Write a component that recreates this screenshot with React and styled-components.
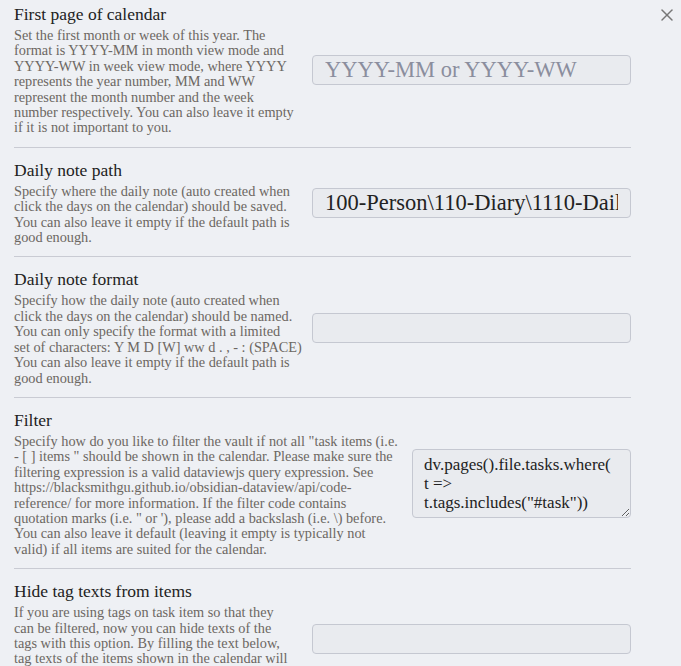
import styled, { createGlobalStyle } from "styled-components";
import { X } from "lucide-react";

const GlobalStyle = createGlobalStyle`
    html, body {
        margin: 0;
        padding: 0;
        overflow: hidden;
        background: #eef0f4;
    }
    body {
        font-family: "Liberation Serif", serif;
    }
`;

const Modal = styled.div`
    position: relative;
    min-height: 666px;
    padding: 0 50px 0 14px;
    background: #eef0f4;
`;

const CloseButton = styled.div`
    position: absolute;
    top: 5px;
    right: 4px;
    width: 20px;
    height: 20px;
    display: flex;
    align-items: center;
    justify-content: center;
    color: #777;
`;

const Item = styled.div`
    display: flex;
    align-items: center;
    gap: 14px;
    padding: ${(props) => (props.$first ? "4px 0 11px" : "12px 0 11px")};
    border-top: ${(props) => (props.$first ? "none" : "1px solid #c9cbd3")};
`;

const Info = styled.div`
    flex: 1 1 auto;
    min-width: 0;
`;

const Name = styled.div`
    font-size: 17.5px;
    line-height: 20px;
    color: #222;
`;

const Description = styled.div`
    margin-top: 4px;
    font-size: 14.3px;
    line-height: 15.4px;
    color: #6c6762;
    white-space: pre;
`;

const Control = styled.div`
    flex: 0 0 auto;
    width: ${(props) => props.$width}px;
    display: flex;
    justify-content: flex-end;
`;

const TextInput = styled.input`
    box-sizing: border-box;
    width: 100%;
    height: 30px;
    padding: 0 12px;
    border: 1px solid #c5c8d1;
    border-radius: 4px;
    background: #e9ebef;
    font-family: "Liberation Serif", serif;
    font-size: 22.5px;
    color: #222;
    outline: none;

    &::placeholder {
        color: #8b8e9e;
    }
`;

const TextArea = styled.textarea`
    box-sizing: border-box;
    width: 100%;
    height: 69px;
    padding: 5px 11px;
    border: 1px solid #c5c8d1;
    border-radius: 4px;
    background: #e9ebef;
    font-family: "Liberation Serif", serif;
    font-size: 17px;
    line-height: 19px;
    color: #222;
    resize: vertical;
    overflow: hidden;
    outline: none;
`;

const settings = [
    {
        name: "First page of calendar",
        desc: [
            "Set the first month or week of this year. The",
            "format is YYYY-MM in month view mode and",
            "YYYY-WW in week view mode, where YYYY",
            "represents the year number, MM and WW",
            "represent the month number and the week",
            "number respectively. You can also leave it empty",
            "if it is not important to you.",
        ],
        control: "input",
        placeholder: "YYYY-MM or YYYY-WW",
    },
    {
        name: "Daily note path",
        desc: [
            "Specify where the daily note (auto created when",
            "click the days on the calendar) should be saved.",
            "You can also leave it empty if the default path is",
            "good enough.",
        ],
        control: "input",
        value: "100-Person\\110-Diary\\1110-Daily",
    },
    {
        name: "Daily note format",
        desc: [
            "Specify how the daily note (auto created when",
            "click the days on the calendar) should be named.",
            "You can only specify the format with a limited",
            "set of characters: Y M D [W] ww d . , - : (SPACE)",
            "You can also leave it empty if the default path is",
            "good enough.",
        ],
        control: "input",
    },
    {
        name: "Filter",
        desc: [
            'Specify how do you like to filter the vault if not all "task items (i.e.',
            '- [ ] items " should be shown in the calendar. Please make sure the',
            "filtering expression is a valid dataviewjs query expression. See",
            "https://blacksmithgu.github.io/obsidian-dataview/api/code-",
            "reference/ for more information. If the filter code contains",
            "quotation marks (i.e. \" or '), please add a backslash (i.e. \\) before.",
            "You can also leave it default (leaving it empty is typically not",
            "valid) if all items are suited for the calendar.",
        ],
        control: "textarea",
        value: 'dv.pages().file.tasks.where( t => t.tags.includes("#task"))',
    },
    {
        name: "Hide tag texts from items",
        desc: [
            "If you are using tags on task item so that they",
            "can be filtered, now you can hide texts of the",
            "tags with this option. By filling the text below,",
            "tag texts of the items shown in the calendar will",
            "be hidden. Separate multiple tags with commas.",
            "Leave it empty to show all tags.",
        ],
        control: "input",
    },
];

function SettingItem({ setting, first }) {
    return (
        <Item $first={first}>
            <Info>
                <Name>{setting.name}</Name>
                <Description>{setting.desc.join("\n")}</Description>
            </Info>
            {setting.control === "textarea" ? (
                <Control $width={219}>
                    <TextArea readOnly defaultValue={setting.value} spellCheck={false} />
                </Control>
            ) : (
                <Control $width={319}>
                    <TextInput
                        type="text"
                        readOnly
                        placeholder={setting.placeholder}
                        defaultValue={setting.value}
                        spellCheck={false}
                    />
                </Control>
            )}
        </Item>
    );
}

export default function App() {
    return (
        <>
            <GlobalStyle />
            <Modal>
                <CloseButton>
                    <X size={20} strokeWidth={1.8} />
                </CloseButton>
                {settings.map((setting, index) => (
                    <SettingItem key={index} setting={setting} first={index === 0} />
                ))}
            </Modal>
        </>
    );
}
